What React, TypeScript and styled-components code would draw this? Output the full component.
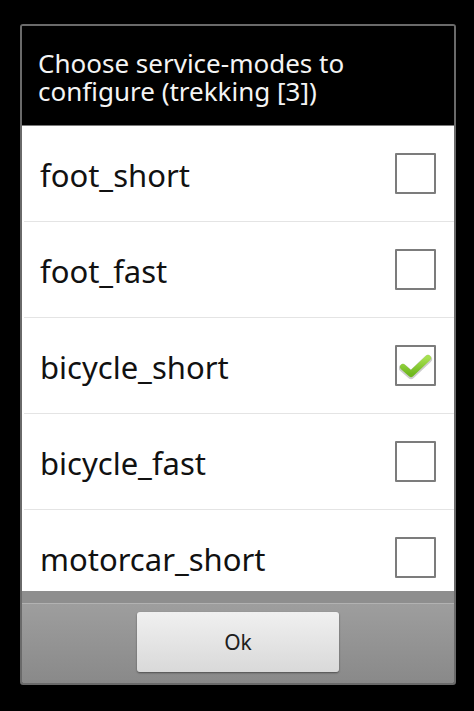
import React from "react";
import styled, { createGlobalStyle } from "styled-components";

const Global = createGlobalStyle`
  html, body { margin: 0; padding: 0; background: #000; }
  body { width: 474px; height: 711px; overflow: hidden; font-family: "Noto Sans", "Open Sans", sans-serif; }
`;

const Screen = styled.div`
  width: 474px;
  height: 711px;
  background: #000;
  padding: 24px 18px 0 20px;
  box-sizing: border-box;
`;

const Dialog = styled.div`
  width: 436px;
  height: 661px;
  box-sizing: border-box;
  border: 2px solid #6a6a6a;
  border-radius: 3px;
  display: flex;
  flex-direction: column;
  overflow: hidden;
`;

const Title = styled.div`
  height: 100px;
  background: #000;
  color: #f4f4f4;
  font-size: 26px;
  padding: 23px 0 0 16px;
  box-sizing: border-box;
  border-bottom: 1px solid #7a7a7a;
`;

const TitleLine = styled.div`
  height: 28px;
  line-height: 28px;
  white-space: nowrap;
`;

const List = styled.div`
  height: 465px;
  background: #fff;
  overflow: hidden;
`;

const Row = styled.div`
  height: 95px;
  display: flex;
  align-items: center;
  justify-content: space-between;
  padding: 0 18px 0 16px;
  border-bottom: 1px solid #e4e4e4;
  margin-left: 2px;
`;

const Label = styled.span`
  font-size: 31px;
  color: #111;
  margin-top: 2px;
`;

const Box = styled.div`
  width: 37px;
  height: 37px;
  border: 2px solid #7c7c7c;
  border-radius: 1px;
  background: #fff;
  display: flex;
  align-items: center;
  justify-content: center;
`;

const Bar = styled.div`
  flex: 1;
  background: linear-gradient(#9e9e9e, #898989);
  border-top: 12px solid #8e8e8e;
  box-shadow: inset 0 1px 0 #b2b2b2;
  display: flex;
  justify-content: center;
  padding-top: 9px;
  box-sizing: border-box;
`;

const Button = styled.button`
  width: 202px;
  height: 60px;
  border: none;
  border-radius: 3px;
  background: linear-gradient(#f0f0f0, #d9d9d9);
  box-shadow: 0 1px 2px rgba(0, 0, 0, 0.45);
  font-family: "Noto Sans", sans-serif;
  font-size: 21px;
  color: #1e1e1e;
  padding: 0;
`;

const Check = () => (
  <svg width="34" height="30" viewBox="0 0 34 30">
    <defs>
      <linearGradient id="g" x1="0" y1="0" x2="0" y2="1">
        <stop offset="0" stopColor="#a6e050" />
        <stop offset="1" stopColor="#6fb81e" />
      </linearGradient>
    </defs>
    <path d="M4 17 L12 24 L29 8" fill="none" stroke="#9a9a9a" strokeWidth="8" strokeLinecap="round" strokeLinejoin="round" opacity="0.5" />
    <path d="M4 16 L12 23 L29 7" fill="none" stroke="url(#g)" strokeWidth="6" strokeLinecap="round" strokeLinejoin="round" />
  </svg>
);

const items: [string, boolean][] = [
  ["foot_short", false],
  ["foot_fast", false],
  ["bicycle_short", true],
  ["bicycle_fast", false],
  ["motorcar_short", false],
];

export default function App() {
  return (
    <>
      <Global />
      <Screen>
        <Dialog>
          <Title>
            <TitleLine>Choose service-modes to</TitleLine>
            <TitleLine>configure (trekking [3])</TitleLine>
          </Title>
          <List>
            {items.map(([name, checked]) => (
              <Row key={name}>
                <Label>{name}</Label>
                <Box>{checked && <Check />}</Box>
              </Row>
            ))}
          </List>
          <Bar>
            <Button>Ok</Button>
          </Bar>
        </Dialog>
      </Screen>
    </>
  );
}
